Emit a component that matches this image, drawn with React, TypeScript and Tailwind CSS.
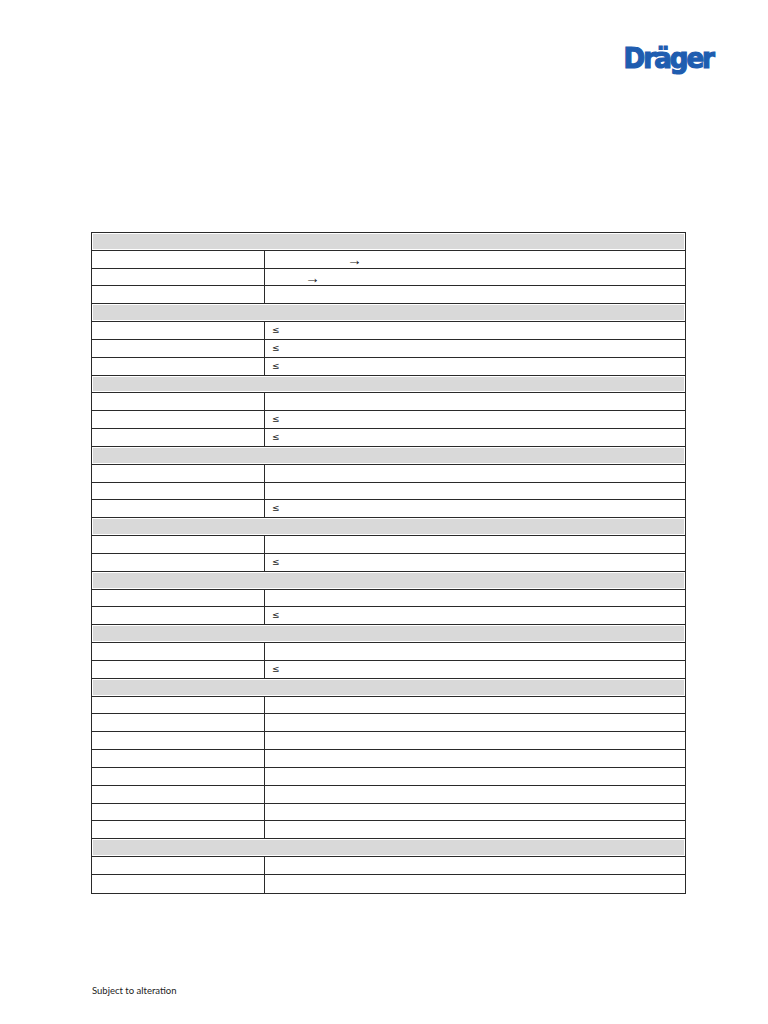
import React from 'react';

type Row =
  | { kind: 'head' }
  | { kind: 'row'; mark?: 'le' | 'arrow'; offset?: string };

const sections: Row[][] = [
  [{ kind: 'head' }, { kind: 'row', mark: 'arrow', offset: 'pl-[82px]' }, { kind: 'row', mark: 'arrow', offset: 'pl-[40px]' }, { kind: 'row' }],
  [{ kind: 'head' }, { kind: 'row', mark: 'le' }, { kind: 'row', mark: 'le' }, { kind: 'row', mark: 'le' }],
  [{ kind: 'head' }, { kind: 'row' }, { kind: 'row', mark: 'le' }, { kind: 'row', mark: 'le' }],
  [{ kind: 'head' }, { kind: 'row' }, { kind: 'row' }, { kind: 'row', mark: 'le' }],
  [{ kind: 'head' }, { kind: 'row' }, { kind: 'row', mark: 'le' }],
  [{ kind: 'head' }, { kind: 'row' }, { kind: 'row', mark: 'le' }],
  [{ kind: 'head' }, { kind: 'row' }, { kind: 'row', mark: 'le' }],
  [{ kind: 'head' }, { kind: 'row' }, { kind: 'row' }, { kind: 'row' }, { kind: 'row' }, { kind: 'row' }, { kind: 'row' }, { kind: 'row' }, { kind: 'row' }],
  [{ kind: 'head' }, { kind: 'row' }, { kind: 'row' }],
];

function TableRow({ row, last }: { row: Row; last: boolean }) {
  const base = `h-[17.84px] ${last ? '' : 'border-b border-[#2a2a2a]'}`;
  if (row.kind === 'head') {
    return (
      <div className={`${base} p-px`}>
        <div className="h-full bg-[#d9d9d9]" />
      </div>
    );
  }
  return (
    <div className={`${base} grid grid-cols-[173px_1fr]`}>
      <div className="border-r border-[#2a2a2a]" />
      <div className={`flex items-center ${row.mark === 'le' ? 'pl-[7px]' : row.offset ?? ''}`}>
        {row.mark === 'le' && <span className="text-[9px] leading-none text-[#222] font-['DejaVu_Sans',sans-serif]">≤</span>}
        {row.mark === 'arrow' && <span className="text-[15px] leading-none text-[#222] font-['Liberation_Sans',sans-serif]">→</span>}
      </div>
    </div>
  );
}

export default function App() {
  const rows = sections.flat();
  return (
    <div className="w-[768px] h-[1024px] bg-white flex flex-col font-['Liberation_Sans',sans-serif]">
      {/* Logo */}
      <div className="h-[232px] flex justify-end pr-[55px] pt-[44px]">
        <span className="h-fit text-[29px] leading-none font-bold tracking-[-2px] text-[#1f5db0] [-webkit-text-stroke:1.2px_#1f5db0] font-['DejaVu_Sans_Condensed','DejaVu_Sans',sans-serif]">
          Dräger
        </span>
      </div>

      {/* Table */}
      <div className="ml-[91px] w-[595px] border border-[#2a2a2a]">
        {rows.map((r, i) => (
          <TableRow key={i} row={r} last={i === rows.length - 1} />
        ))}
      </div>

      <div className="mt-auto pb-[27px] pl-[92px] text-[9.5px] leading-[12px] text-[#222] font-['Lato',sans-serif]">
        Subject to alteration
      </div>
    </div>
  );
}
